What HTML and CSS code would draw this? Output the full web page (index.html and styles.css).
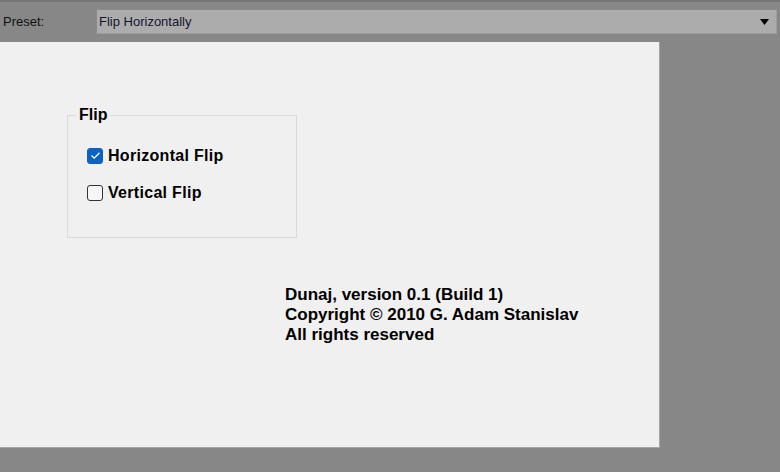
FILE: index.html
```html
<!DOCTYPE html>
<html>
<head>
<meta charset="utf-8">
<link rel="stylesheet" href="styles.css">
</head>
<body>
<div class="toolbar">
  <span class="preset-label">Preset:</span>
  <div class="combo">
    <span class="combo-text">Flip Horizontally</span>
    <svg class="combo-arrow" width="9" height="6" viewBox="0 0 9 6"><path d="M0 0H9L4.5 6Z" fill="#000"/></svg>
  </div>
</div>
<div class="workspace">
  <div class="panel">
    <fieldset class="group">
      <legend class="group-title">Flip</legend>
      <div class="option">
        <span class="box checked"><svg width="11" height="9" viewBox="0 0 11 9"><path d="M1.5 4.5L4.2 7.2L9.5 1.8" fill="none" stroke="#fff" stroke-width="1.3"/></svg></span>
        <span class="option-label">Horizontal Flip</span>
      </div>
      <div class="option">
        <span class="box"></span>
        <span class="option-label">Vertical Flip</span>
      </div>
    </fieldset>
    <div class="about">
      <div>Dunaj, version 0.1 (Build 1)</div>
      <div>Copyright © 2010 G. Adam Stanislav</div>
      <div>All rights reserved</div>
    </div>
  </div>
</div>
</body>
</html>
```
FILE: styles.css
```css
html, body {
  margin: 0;
  padding: 0;
}
body {
  background: #878787;
  width: 780px;
  height: 472px;
  overflow: hidden;
  font-family: "Liberation Sans", Arial, sans-serif;
}
.toolbar {
  border-top: 2px solid #757575;
  height: 40px;
  display: flex;
  align-items: flex-start;
  box-sizing: content-box;
}
.preset-label {
  font-size: 13px;
  color: #111;
  margin-left: 3px;
  margin-top: 12px;
  width: 93px;
}
.combo {
  flex: 1;
  margin-top: 7px;
  margin-right: 3px;
  height: 25px;
  box-sizing: border-box;
  background: #acacac;
  border-top: 1px solid #8a8a8a;
  border-left: 1px solid #8a8a8a;
  border-right: 1px solid #9c9c9c;
  border-bottom: 1px solid #9c9c9c;
  display: flex;
  align-items: center;
  justify-content: space-between;
  padding: 0 7px 0 2px;
}
.combo-text {
  font-size: 13px;
  color: #151530;
}
.combo-arrow {
  display: block;
}
.workspace {
  display: flex;
}
.panel {
  width: 659px;
  height: 405px;
  background: #f0f0f0;
  border-right: 1px solid #a6a6a6;
  border-bottom: 1px solid #a6a6a6;
  display: flex;
  flex-direction: column;
  align-items: flex-start;
}
.group {
  margin: 64px 0 0 67px;
  width: 230px;
  height: 132px;
  box-sizing: border-box;
  border: 1px solid #dadada;
  padding: 21px 0 0 19px;
  display: flex;
  flex-direction: column;
  gap: 16px;
}
.group-title {
  font-size: 16px;
  font-weight: bold;
  color: #000;
  padding: 0 3px;
  margin-left: -11px;
  line-height: 18px;
}
.option {
  display: flex;
  align-items: center;
  gap: 5px;
  height: 21px;
}
.box {
  width: 16px;
  height: 16px;
  box-sizing: border-box;
  border: 1px solid #333;
  border-radius: 3px;
  background: #f6f6f6;
  display: flex;
  align-items: center;
  justify-content: center;
}
.box.checked {
  background: #0a63c4;
  border-color: #0a63c4;
}
.box svg {
  display: block;
}
.option-label {
  font-size: 16px;
  font-weight: bold;
  color: #000;
  letter-spacing: 0.3px;
}
.about {
  margin: 47px 0 0 285px;
  font-size: 17px;
  font-weight: bold;
  line-height: 20px;
  color: #000;
}
```
